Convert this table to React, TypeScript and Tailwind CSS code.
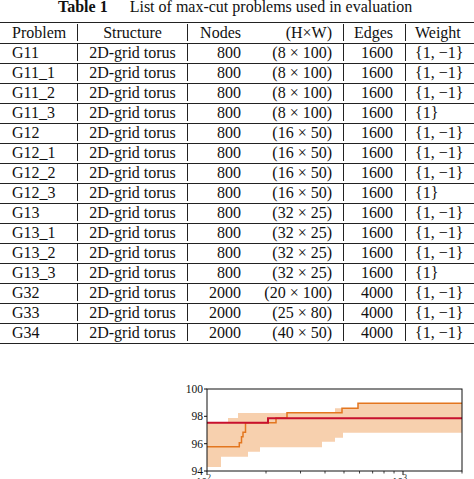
import React from 'react';

const rows = [
  { name: 'G11', nodes: '800', hw: '(8 × 100)', edges: '1600', weight: '{1, −1}' },
  { name: 'G11_1', nodes: '800', hw: '(8 × 100)', edges: '1600', weight: '{1, −1}' },
  { name: 'G11_2', nodes: '800', hw: '(8 × 100)', edges: '1600', weight: '{1, −1}' },
  { name: 'G11_3', nodes: '800', hw: '(8 × 100)', edges: '1600', weight: '{1}' },
  { name: 'G12', nodes: '800', hw: '(16 × 50)', edges: '1600', weight: '{1, −1}' },
  { name: 'G12_1', nodes: '800', hw: '(16 × 50)', edges: '1600', weight: '{1, −1}' },
  { name: 'G12_2', nodes: '800', hw: '(16 × 50)', edges: '1600', weight: '{1, −1}' },
  { name: 'G12_3', nodes: '800', hw: '(16 × 50)', edges: '1600', weight: '{1}' },
  { name: 'G13', nodes: '800', hw: '(32 × 25)', edges: '1600', weight: '{1, −1}' },
  { name: 'G13_1', nodes: '800', hw: '(32 × 25)', edges: '1600', weight: '{1, −1}' },
  { name: 'G13_2', nodes: '800', hw: '(32 × 25)', edges: '1600', weight: '{1, −1}' },
  { name: 'G13_3', nodes: '800', hw: '(32 × 25)', edges: '1600', weight: '{1}' },
  { name: 'G32', nodes: '2000', hw: '(20 × 100)', edges: '4000', weight: '{1, −1}' },
  { name: 'G33', nodes: '2000', hw: '(25 × 80)', edges: '4000', weight: '{1, −1}' },
  { name: 'G34', nodes: '2000', hw: '(40 × 50)', edges: '4000', weight: '{1, −1}' },
];

// log-scale x: 10^2 at 207, 10^3 at 403
const lx = (v: number) => 207 + (Math.log10(v) - 2) * 196;
const minorTicks = [200, 300, 400, 500, 600, 700, 800, 900, 2000];

const Row: React.FC<{ cells: string[]; head?: boolean }> = ({ cells, head }) => (
  <div className={`flex border-b border-[#222] leading-[18px] pb-[2px] ${head ? 'h-[21px] pt-[1px]' : 'h-[20px]'}`}>
    <div className="w-[78px] shrink-0 border-r border-[#222] pl-[12px]">{cells[0]}</div>
    <div className="w-[110px] shrink-0 border-r border-[#222] text-center">{cells[1]}</div>
    <div className="w-[53px] shrink-0 text-right">{cells[2]}</div>
    <div className="w-[103px] shrink-0 border-r border-[#222] text-right pr-[11px]">{cells[3]}</div>
    <div className="w-[62px] shrink-0 border-r border-[#222] text-right pr-[12px]">{cells[4]}</div>
    <div className="flex-1 pl-[9px] whitespace-nowrap">{cells[5]}</div>
  </div>
);

const Chart: React.FC = () => (
  <svg width="474" height="135" viewBox="0 344 474 135" className="block">
    <polygon
      fill="#f7d0ae"
      points="207,422.7 228,422.7 228,418 238,418 238,413 335,413 335,408.3 358,408.3 358,403.3 462,403.3 462,432.7 343,432.7 343,437.7 335,437.7 335,441.7 322,441.7 322,447.3 260,447.3 260,451.7 248,451.7 248,456.7 221,456.7 221,467 207,467"
    />
    <polyline
      fill="none"
      stroke="#e3761f"
      strokeWidth="1.5"
      points="207,446.7 239.3,446.7 239.3,442.7 241.5,442.7 241.5,436.7 243,436.7 243,432.3 245.5,432.3 245.5,422.7 276,422.7 276,418 287,418 287,412.7 342,412.7 342,408.3 358,408.3 358,403.3 462,403.3"
    />
    <polyline
      fill="none"
      stroke="#c8102e"
      strokeWidth="2"
      points="207,422.7 268,422.7 268,418.3 462,418.3"
    />
    <rect x="207" y="389" width="255" height="82" fill="none" stroke="#111" strokeWidth="1" />
    {[
      { y: 389, t: '100' },
      { y: 416.3, t: '98' },
      { y: 443.7, t: '96' },
      { y: 471, t: '94' },
    ].map((d) => (
      <g key={d.t}>
        <line x1="204" x2="207" y1={d.y} y2={d.y} stroke="#111" strokeWidth="1" />
        <text x="203" y={d.y + 4} textAnchor="end" fontSize="11.5" fontFamily="'Liberation Serif', serif" fill="#111">
          {d.t}
        </text>
      </g>
    ))}
    {[100, 1000].map((v) => (
      <line key={v} x1={lx(v)} x2={lx(v)} y1="471" y2="475" stroke="#111" strokeWidth="1" />
    ))}
    {minorTicks.map((v) => (
      <line key={v} x1={lx(v)} x2={lx(v)} y1="471" y2="473.5" stroke="#111" strokeWidth="0.8" />
    ))}
    <text x="196" y="485" fontSize="11" fontFamily="'Liberation Serif', serif" fill="#111">10</text>
    <text x="207" y="480" fontSize="8" fontFamily="'Liberation Serif', serif" fill="#111">2</text>
    <text x="392" y="485" fontSize="11" fontFamily="'Liberation Serif', serif" fill="#111">10</text>
    <text x="403" y="480" fontSize="8" fontFamily="'Liberation Serif', serif" fill="#111">3</text>
  </svg>
);

export default function App() {
  return (
    <div className="w-[474px] h-[479px] overflow-hidden bg-white text-[#111] font-[family-name:'Liberation_Serif',serif] text-[16px]">
      <div className="h-[22px] leading-[14px] flex pl-[58px] gap-[22px] whitespace-nowrap">
        <span className="font-bold">Table 1</span>
        <span>List of max-cut problems used in evaluation</span>
      </div>
      <div className="border-t border-[#222]">
        <Row head cells={['Problem', 'Structure', 'Nodes', '(H×W)', 'Edges', 'Weight']} />
        {rows.map((r) => (
          <Row key={r.name} cells={[r.name, '2D-grid torus', r.nodes, r.hw, r.edges, r.weight]} />
        ))}
      </div>
      <Chart />
    </div>
  );
}
